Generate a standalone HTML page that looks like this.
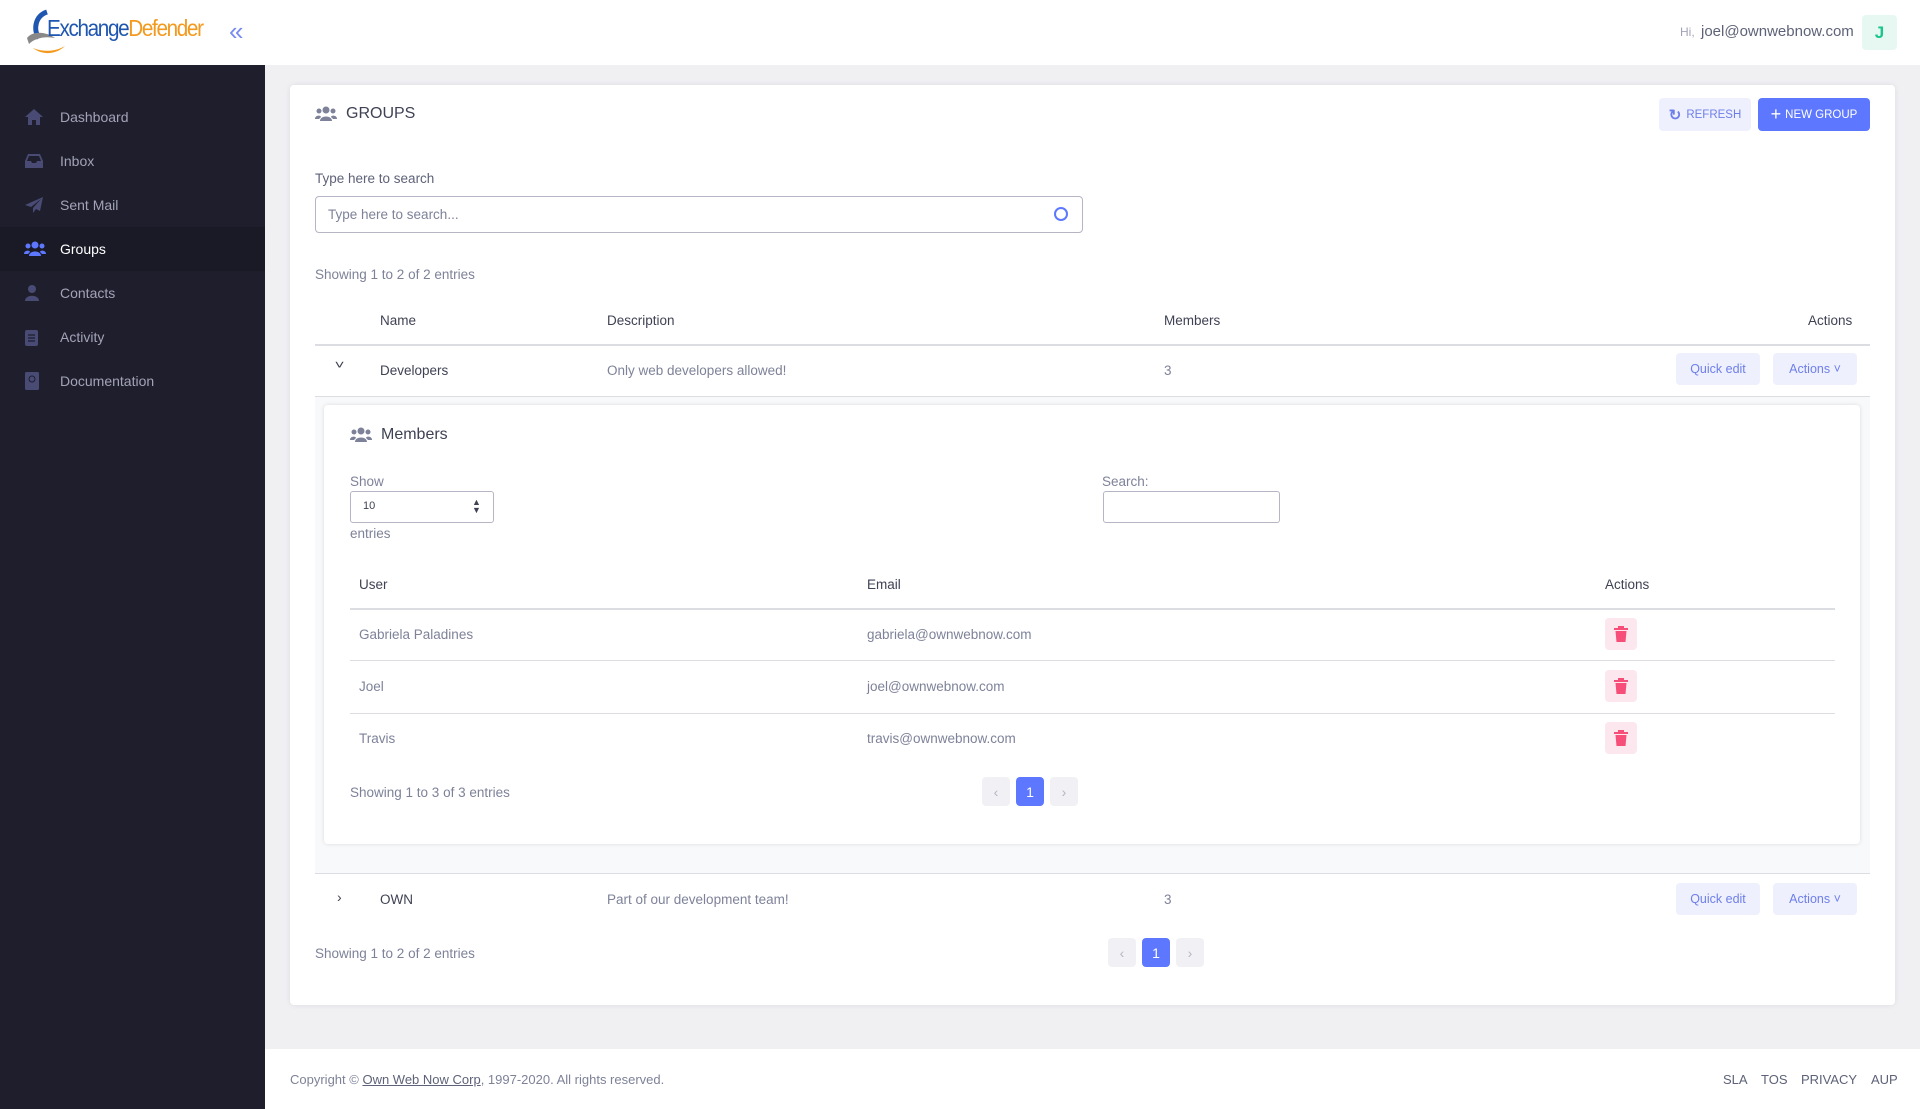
<!DOCTYPE html>
<html><head><meta charset="utf-8"><style>
*{box-sizing:border-box;margin:0;padding:0}
body{width:1920px;height:1109px;overflow:hidden;background:#f0f0f3;font-family:"Liberation Sans",sans-serif;color:#3f4254;font-size:13.5px;position:relative}
.a{position:absolute}
.hdr{left:0;top:0;width:1920px;height:65px;background:#fff}
.side{left:0;top:65px;width:265px;height:1044px;background:#1e1e2d}
.nav{left:0;width:265px;height:44px;display:flex;align-items:center;color:#a2a3b7;font-size:14px}
.nav svg{position:absolute;left:24px}
.nav span{position:absolute;left:60px}
.nav.act{background:#1a1a27;color:#fff}
.card{left:290px;top:85px;width:1605px;height:920px;background:#fff;border-radius:4px;box-shadow:0 0 6px rgba(0,0,0,.08)}
.btn{display:flex;align-items:center;justify-content:center;border-radius:4px;font-size:11.5px}
.lt{background:#eef0fd;color:#6e7fe9}
.line{height:1px;background:#dcdde2}
.g{color:#7e8299}
.th{color:#3f4254;font-size:13.5px}
.pg{width:28px;height:29px;border-radius:4px;background:#f1f1f5;color:#b5b5c3;display:flex;align-items:center;justify-content:center;font-size:14px}
.pg.on{background:#5d78ff;color:#fff}
.tr{width:32px;height:32px;border-radius:4px;background:#fde7ee;display:flex;align-items:center;justify-content:center}
</style></head><body>
<div class="a hdr"></div>
<svg class="a" style="left:25px;top:8px" width="40" height="50" viewBox="0 0 40 50"><path d="M22 4 C10 8 8 22 14 30" stroke="#1e56b0" stroke-width="5" fill="none"/><path d="M2 30 C8 22 22 24 30 30 C20 28 10 30 4 36Z" fill="#888"/><path d="M8 40 C18 48 32 46 40 38 C30 44 18 44 8 40Z" fill="#f39a1e"/></svg>
<div class="a" style="left:47px;top:15px;font-size:23px;letter-spacing:-1.5px;transform:scaleX(.9);transform-origin:left"><span style="color:#1e56b0">Exchange</span><span style="color:#f39a1e">Defender</span></div>
<div class="a" style="left:229px;top:16px;color:#7a8cf0;font-size:26px">«</div>
<div class="a" style="left:1680px;top:25px;font-size:12px;color:#a2a3b7">Hi,</div>
<div class="a" style="left:1701px;top:23px;font-size:15px;color:#5e6278">joel@ownwebnow.com</div>
<div class="a" style="left:1862px;top:15px;width:35px;height:35px;border-radius:4px;background:#e6f8f1;color:#1bc58d;font-weight:bold;font-size:17px;display:flex;align-items:center;justify-content:center">J</div>

<div class="a side"></div>
<div class="a nav" style="top:95px"><svg width="20" height="18" viewBox="0 0 20 18"><path d="M10 1 L1 9 H4 V17 H8 V12 H12 V17 H16 V9 H19Z" fill="#494b74"/></svg><span>Dashboard</span></div>
<div class="a nav" style="top:139px"><svg width="20" height="16" viewBox="0 0 20 16"><path d="M4 1 H16 L19 8 V15 H1 V8Z M3 8 H7 L8 10 H12 L13 8 H17 L15 3 H5Z" fill="#494b74" fill-rule="evenodd"/></svg><span>Inbox</span></div>
<div class="a nav" style="top:183px"><svg width="20" height="18" viewBox="0 0 20 18"><path d="M19 1 L1 9 L7 11 L17 3 L9 12 V17 L12 13 L16 15Z" fill="#494b74"/></svg><span>Sent Mail</span></div>
<div class="a nav act" style="top:227px"><svg width="22" height="16" viewBox="0 0 22 16"><circle cx="11" cy="4" r="3.5" fill="#5d78ff"/><circle cx="4" cy="5" r="2.5" fill="#5d78ff"/><circle cx="18" cy="5" r="2.5" fill="#5d78ff"/><path d="M5 15 C5 9 17 9 17 15Z M0 13 C0 9 6 9 6 11 L4 13Z M22 13 C22 9 16 9 16 11 L18 13Z" fill="#5d78ff"/></svg><span>Groups</span></div>
<div class="a nav" style="top:271px"><svg width="20" height="18" viewBox="0 0 20 18"><circle cx="8" cy="5" r="4" fill="#494b74"/><path d="M1 17 C1 10 15 10 15 17Z" fill="#494b74"/></svg><span>Contacts</span></div>
<div class="a nav" style="top:315px"><svg width="20" height="18" viewBox="0 0 20 18"><rect x="1" y="2" width="13" height="16" rx="2" fill="#494b74"/><path d="M4 7h7M4 10h7M4 13h7" stroke="#1e1e2d" stroke-width="1.2"/></svg><span>Activity</span></div>
<div class="a nav" style="top:359px"><svg width="20" height="18" viewBox="0 0 20 18"><rect x="1" y="0" width="14" height="18" rx="1.5" fill="#494b74"/><circle cx="8" cy="7" r="3" fill="none" stroke="#1e1e2d"/></svg><span>Documentation</span></div>

<div class="a card"></div>
<svg class="a" style="left:315px;top:106px" width="22" height="16" viewBox="0 0 22 16"><circle cx="11" cy="4" r="3.5" fill="#7e8299"/><circle cx="4" cy="5" r="2.5" fill="#7e8299"/><circle cx="18" cy="5" r="2.5" fill="#7e8299"/><path d="M5 15 C5 9 17 9 17 15Z M0 13 C0 9 6 9 6 11 L4 13Z M22 13 C22 9 16 9 16 11 L18 13Z" fill="#7e8299"/></svg>
<div class="a" style="left:346px;top:105px;font-size:16px;color:#3f4254">GROUPS</div>
<div class="a btn lt" style="left:1659px;top:98px;width:92px;height:33px"><span style="font-size:15px;margin-right:5px;font-weight:bold">↻</span>REFRESH</div>
<div class="a btn" style="left:1758px;top:98px;width:112px;height:33px;background:#5d78ff;color:#fff"><span style="font-size:18px;margin-right:4px">+</span>NEW GROUP</div>
<div class="a" style="left:315px;top:171px;color:#5e6278">Type here to search</div>
<div class="a" style="left:315px;top:196px;width:768px;height:37px;border:1px solid #b5b5c3;border-radius:4px"></div>
<div class="a g" style="left:328px;top:207px">Type here to search...</div>
<div class="a" style="left:1054px;top:207px;width:14px;height:14px;border:2px solid #5d78ff;border-radius:50%"></div>
<div class="a g" style="left:315px;top:267px">Showing 1 to 2 of 2 entries</div>
<div class="a th" style="left:380px;top:313px">Name</div>
<div class="a th" style="left:607px;top:313px">Description</div>
<div class="a th" style="left:1164px;top:313px">Members</div>
<div class="a th" style="left:1808px;top:313px">Actions</div>
<div class="a line" style="left:315px;top:344px;width:1555px;height:2px"></div>
<div class="a" style="left:336px;top:358px;font-size:12px;transform:scaleX(1.4);color:#3f4254">&#709;</div>
<div class="a" style="left:380px;top:363px">Developers</div>
<div class="a g" style="left:607px;top:363px">Only web developers allowed!</div>
<div class="a g" style="left:1164px;top:363px">3</div>
<div class="a btn lt" style="left:1676px;top:353px;width:84px;height:32px;font-size:12.5px">Quick edit</div>
<div class="a btn lt" style="left:1773px;top:353px;width:84px;height:32px;font-size:12.5px">Actions &#709;</div>
<div class="a line" style="left:315px;top:396px;width:1555px"></div>
<div class="a" style="left:315px;top:397px;width:1555px;height:476px;background:#f8f9fb"></div>
<div class="a" style="left:324px;top:405px;width:1536px;height:439px;background:#fff;border-radius:4px;box-shadow:0 0 4px rgba(0,0,0,.12)"></div>
<svg class="a" style="left:350px;top:427px" width="22" height="16" viewBox="0 0 22 16"><circle cx="11" cy="4" r="3.5" fill="#7e8299"/><circle cx="4" cy="5" r="2.5" fill="#7e8299"/><circle cx="18" cy="5" r="2.5" fill="#7e8299"/><path d="M5 15 C5 9 17 9 17 15Z M0 13 C0 9 6 9 6 11 L4 13Z M22 13 C22 9 16 9 16 11 L18 13Z" fill="#7e8299"/></svg>
<div class="a" style="left:381px;top:426px;font-size:16px">Members</div>
<div class="a g" style="left:350px;top:474px">Show</div>
<div class="a" style="left:350px;top:491px;width:144px;height:32px;border:1px solid #b5b5c3;border-radius:3px"></div>
<div class="a" style="left:363px;top:500px;font-size:11px">10</div>
<div class="a" style="left:472px;top:498px;font-size:9px;line-height:8px">▲<br>▼</div>
<div class="a g" style="left:350px;top:526px">entries</div>
<div class="a g" style="left:1102px;top:474px">Search:</div>
<div class="a" style="left:1103px;top:491px;width:177px;height:32px;border:1px solid #b5b5c3;border-radius:3px"></div>
<div class="a th" style="left:359px;top:577px">User</div>
<div class="a th" style="left:867px;top:577px">Email</div>
<div class="a th" style="left:1605px;top:577px">Actions</div>
<div class="a line" style="left:350px;top:608px;width:1485px;height:2px"></div>
<div class="a g" style="left:359px;top:627px">Gabriela Paladines</div>
<div class="a g" style="left:867px;top:627px">gabriela@ownwebnow.com</div>
<div class="a line" style="left:350px;top:660px;width:1485px"></div>
<div class="a g" style="left:359px;top:679px">Joel</div>
<div class="a g" style="left:867px;top:679px">joel@ownwebnow.com</div>
<div class="a line" style="left:350px;top:713px;width:1485px"></div>
<div class="a g" style="left:359px;top:731px">Travis</div>
<div class="a g" style="left:867px;top:731px">travis@ownwebnow.com</div>
<div class="a tr" style="left:1605px;top:618px"><svg width="14" height="16" viewBox="0 0 14 16"><path d="M0 2h14v2H0z M4 0h6v2H4z M1.5 5h11l-1 11h-9z" fill="#f64e78"/></svg></div>
<div class="a tr" style="left:1605px;top:670px"><svg width="14" height="16" viewBox="0 0 14 16"><path d="M0 2h14v2H0z M4 0h6v2H4z M1.5 5h11l-1 11h-9z" fill="#f64e78"/></svg></div>
<div class="a tr" style="left:1605px;top:722px"><svg width="14" height="16" viewBox="0 0 14 16"><path d="M0 2h14v2H0z M4 0h6v2H4z M1.5 5h11l-1 11h-9z" fill="#f64e78"/></svg></div>
<div class="a g" style="left:350px;top:785px">Showing 1 to 3 of 3 entries</div>
<div class="a pg" style="left:982px;top:777px">‹</div>
<div class="a pg on" style="left:1016px;top:777px">1</div>
<div class="a pg" style="left:1050px;top:777px">›</div>
<div class="a line" style="left:315px;top:873px;width:1555px"></div>
<div class="a" style="left:337px;top:889px;font-size:14px">›</div>
<div class="a" style="left:380px;top:892px">OWN</div>
<div class="a g" style="left:607px;top:892px">Part of our development team!</div>
<div class="a g" style="left:1164px;top:892px">3</div>
<div class="a btn lt" style="left:1676px;top:883px;width:84px;height:32px;font-size:12.5px">Quick edit</div>
<div class="a btn lt" style="left:1773px;top:883px;width:84px;height:32px;font-size:12.5px">Actions &#709;</div>
<div class="a g" style="left:315px;top:946px">Showing 1 to 2 of 2 entries</div>
<div class="a pg" style="left:1108px;top:938px">‹</div>
<div class="a pg on" style="left:1142px;top:938px">1</div>
<div class="a pg" style="left:1176px;top:938px">›</div>

<div class="a" style="left:265px;top:1049px;width:1655px;height:60px;background:#fff"></div>
<div class="a g" style="left:290px;top:1072px;font-size:13px">Copyright © <u style="color:#5e6278">Own Web Now Corp</u>, 1997-2020. All rights reserved.</div>
<div class="a" style="left:1723px;top:1072px;font-size:13px;color:#5e6278">SLA</div>
<div class="a" style="left:1761px;top:1072px;font-size:13px;color:#5e6278">TOS</div>
<div class="a" style="left:1801px;top:1072px;font-size:13px;color:#5e6278">PRIVACY</div>
<div class="a" style="left:1871px;top:1072px;font-size:13px;color:#5e6278">AUP</div>
</body></html>
